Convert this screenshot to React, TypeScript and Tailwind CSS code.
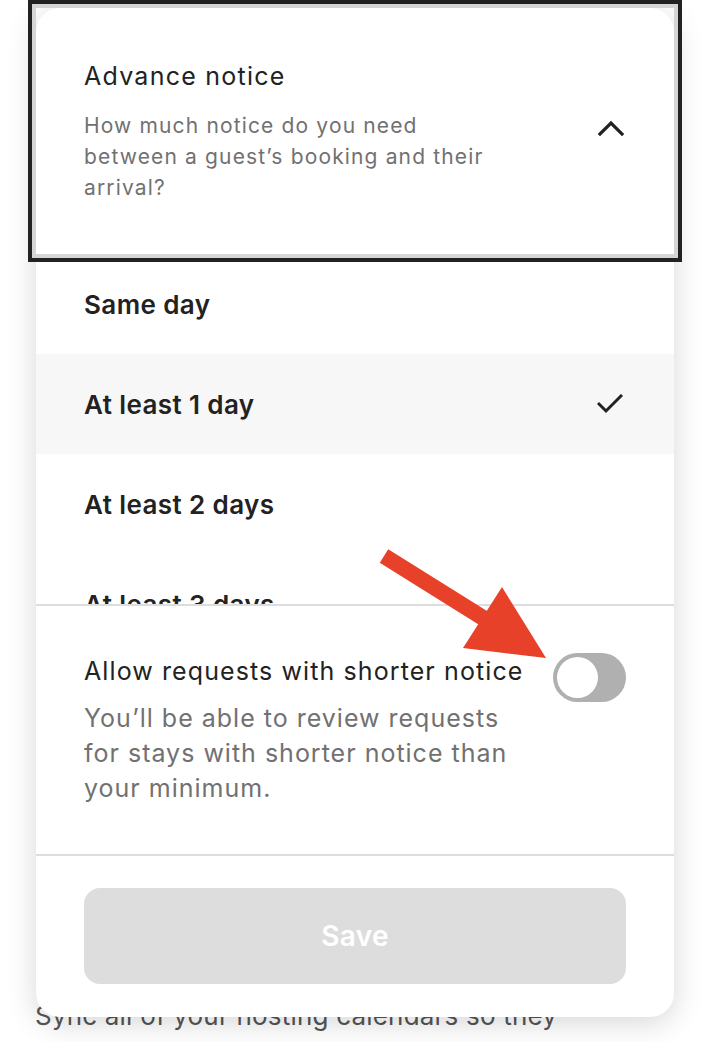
import React from "react";

const FONT = { fontFamily: "Inter, 'Noto Sans', sans-serif" };

function Chevron() {
  return (
    <svg width="28" height="16" viewBox="0 0 28 16" fill="none">
      <path d="M3 14 L14 3 L25 14" stroke="#222222" strokeWidth="3.2" strokeLinecap="square" strokeLinejoin="miter" />
    </svg>
  );
}

function Check() {
  return (
    <svg width="26" height="20" viewBox="0 0 26 20" fill="none">
      <path d="M2 10 L9 17 L24 2" stroke="#222222" strokeWidth="3" strokeLinecap="square" />
    </svg>
  );
}

const options = ["Same day", "At least 1 day", "At least 2 days", "At least 3 days"];

export default function App() {
  return (
    <div className="relative min-h-screen w-full overflow-hidden bg-white" style={FONT}>
      <div className="pl-[36px] pt-[8px]">
        <div className="relative z-10 w-[638px] rounded-[24px] bg-white shadow-[0_6px_30px_rgba(0,0,0,0.16)]">
          {/* Header */}
          <div className="relative flex h-[246px] items-center justify-between px-12">
            <div>
              <div className="text-[25px] leading-[32px] tracking-[1.25px] text-[#222222]">Advance notice</div>
              <div className="mt-[18px] text-[21px] leading-[31px] tracking-[1.15px] text-[#717171]">
                How much notice do you need
                <br />
                between a guest’s booking and their
                <br />
                arrival?
              </div>
            </div>
            <div className="mr-[1px] mt-[-6px]">
              <Chevron />
            </div>
            <div className="pointer-events-none absolute -inset-2 z-20 border-4 border-[#222222] shadow-[inset_0_0_0_4px_#d5d5d5]" />
          </div>
          {/* Options list */}
          <div className="h-[350px] overflow-hidden">
            {options.map((o) => (
              <div
                key={o}
                className={`flex h-[100px] items-center justify-between px-12 ${o === "At least 1 day" ? "bg-[#f7f7f7]" : "bg-white"}`}
              >
                <span className="text-[26px] font-semibold tracking-[0.4px] text-[#222222]">{o}</span>
                {o === "At least 1 day" && (
                  <span className="mr-[3px]">
                    <Check />
                  </span>
                )}
              </div>
            ))}
          </div>
          {/* Toggle section */}
          <div className="flex items-start justify-between border-t-2 border-[#dddddd] px-12 pb-[48px] pt-[47px]">
            <div className="w-[452px]">
              <div className="text-[25px] leading-[36px] tracking-[1.1px] text-[#222222]">Allow requests with shorter notice</div>
              <div className="mt-[12px] text-[25px] leading-[35px] tracking-[1px] text-[#717171]">
                You’ll be able to review requests
                <br />
                for stays with shorter notice than
                <br />
                your minimum.
              </div>
            </div>
            <div className="flex h-[49px] w-[73px] items-center rounded-full bg-[#b0b0b0] p-[4px]">
              <div className="h-[41px] w-[41px] rounded-full bg-white" />
            </div>
          </div>
          {/* Footer */}
          <div className="border-t-2 border-[#dddddd] px-12 pb-[33px] pt-[32px]">
            <div className="flex h-[96px] items-center justify-center rounded-[16px] bg-[#dddddd] text-[28px] font-semibold tracking-[0.3px] text-white">
              Save
            </div>
          </div>
        </div>
        <div className="relative z-0 -mt-[19px] ml-[-1px] text-[26px] leading-[36px] tracking-[0.2px] text-[#555555]">
          Sync all of your hosting calendars so they
        </div>
      </div>
      {/* Red annotation arrow */}
      <svg className="pointer-events-none absolute left-0 top-0 z-30" width="716" height="1042" viewBox="0 0 716 1042">
        <line x1="384" y1="556" x2="488" y2="621" stroke="#e8412a" strokeWidth="16" />
        <polygon points="502,587 463,648 546,658" fill="#e8412a" />
      </svg>
    </div>
  );
}
